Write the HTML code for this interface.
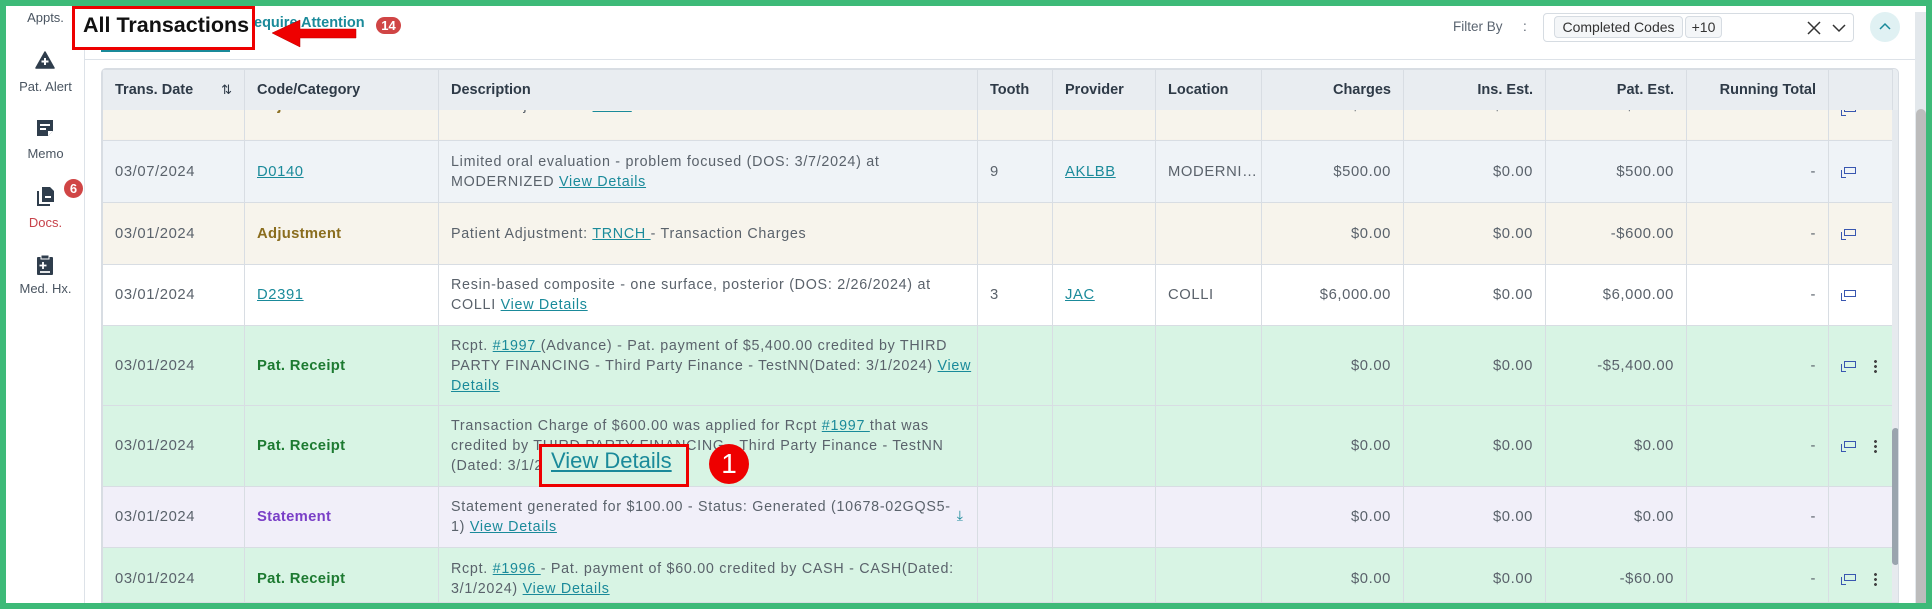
<!DOCTYPE html>
<html><head><meta charset="utf-8"><style>
*{box-sizing:border-box;margin:0;padding:0}
body{width:1932px;height:609px;background:#3dba78;font-family:"Liberation Sans",sans-serif;position:relative;overflow:hidden;color:#5a626b}
.abs{position:absolute}
#page{left:6px;top:6px;width:1920px;height:597px;background:#fff;overflow:hidden}
.sb{left:0;top:0;width:79px;height:597px;border-right:1px solid #dde2e8;background:#fff}
.sl{position:absolute;left:0;width:79px;text-align:center;font-size:13px;color:#4a5561}
table{border-collapse:collapse;table-layout:fixed;font-size:14.8px}
td,th{border:1px solid #d8dde3;padding:0 12px;vertical-align:middle;line-height:20px;white-space:nowrap}
td{letter-spacing:0.6px}
td.d{font-size:14.3px;letter-spacing:0.72px}
th{background:#e9edf1;color:#2e3a47;font-weight:bold;text-align:left;height:41px;font-size:14.5px}
.r{text-align:right}
a{color:#1a8a9a;text-decoration:underline}
.adj{background:#f7f4ec}.sel{background:#eff3f7}.wh{background:#fff}.pr{background:#d8f4e4}.st{background:#f1eff9}
.cadj{color:#8a6d1e;font-weight:bold;letter-spacing:0.3px}.cpr{color:#1d7a31;font-weight:bold;letter-spacing:0.3px}.cst{color:#7a3fc7;font-weight:bold;letter-spacing:0.3px}
.ic{display:inline-block;width:14px;height:10px;position:relative;vertical-align:middle}
.ic:before{content:"";position:absolute;left:3px;top:0;width:10px;height:5px;border:1.6px solid #3856b0}
.ic:after{content:"";position:absolute;left:0;top:3px;width:4px;height:7px;border-left:1.6px solid #3856b0;border-bottom:1.6px solid #3856b0}
.keb{position:absolute;left:45px;top:50%;margin-top:-7px;width:3px;height:14px;background:radial-gradient(circle,#444 1.3px,transparent 1.6px) 0 0/3px 5px repeat-y}
</style></head><body>
<div id="page" class="abs">
 <div class="abs sb">
  <div class="sl" style="top:4px">Appts.</div>
  <svg class="abs" style="left:29px;top:45px" width="20" height="18" viewBox="0 0 20 18"><path d="M10 1L19 17H1Z" fill="#2f3d4c" stroke="#2f3d4c" stroke-linejoin="round" stroke-width="1.5"/><path d="M10 7v7M6.5 10.5h7" stroke="#fff" stroke-width="2"/></svg>
  <div class="sl" style="top:73px">Pat. Alert</div>
  <svg class="abs" style="left:29px;top:112px" width="20" height="20" viewBox="0 0 20 20"><path d="M2 2h16v11l-5 5H2z" fill="#2f3d4c"/><path d="M5 7h10M5 11h6" stroke="#fff" stroke-width="2"/><path d="M13 18v-5h5" fill="#fff"/></svg>
  <div class="sl" style="top:140px">Memo</div>
  <svg class="abs" style="left:31px;top:180px" width="18" height="20" viewBox="0 0 18 20"><path d="M5 1h8l4 4v11H5z" fill="#2f3d4c"/><path d="M1 5v14h12" stroke="#2f3d4c" stroke-width="2" fill="none"/><path d="M8 11h6" stroke="#fff" stroke-width="2"/></svg>
  <div class="abs" style="left:58px;top:173px;width:19px;height:19px;border-radius:50%;background:#d04545;color:#fff;font-size:13px;text-align:center;line-height:19px;font-weight:bold">6</div>
  <div class="sl" style="top:209px;color:#c7424a">Docs.</div>
  <svg class="abs" style="left:30px;top:248px" width="18" height="22" viewBox="0 0 18 22"><rect x="1" y="3" width="16" height="18" rx="1" fill="#2f3d4c"/><rect x="5" y="1" width="8" height="4" fill="#2f3d4c" stroke="#fff" stroke-width="1"/><path d="M7 8v7M3.5 11.5h7M4 18h10" stroke="#fff" stroke-width="1.8"/></svg>
  <div class="sl" style="top:275px">Med. Hx.</div>
 </div>
 <div class="abs" style="left:79px;top:53px;width:1830px;height:1px;background:#dde2e8"></div>
 <div class="abs" style="left:95px;top:43px;width:129px;height:3px;background:#1a8a9a"></div>
 <div class="abs" style="left:248px;top:9px;font-size:14.5px;font-weight:bold;color:#1a8a9a">equire Attention</div>
 <div class="abs" style="left:370px;top:11px;width:25px;height:17px;border-radius:9px;background:#d04545;color:#fff;font-size:13px;text-align:center;line-height:17px;font-weight:bold">14</div>
 <div class="abs" style="left:66px;top:0;width:183px;height:44px;border:3px solid #e00;background:#fff"></div>
 <div class="abs" style="left:77px;top:7px;font-size:21.5px;font-weight:bold;color:#111">All Transactions</div>
 <svg class="abs" style="left:262px;top:10px" width="96" height="36" viewBox="0 0 96 36"><path d="M4 17L32 4v9h56v9H32v9z" fill="#e00" stroke="#b00" stroke-width=".5"/></svg>
 <div class="abs" style="left:1447px;top:13px;font-size:13.5px;color:#5a6470">Filter By</div>
 <div class="abs" style="left:1517px;top:13px;font-size:13.5px;color:#5a6470">:</div>
 <div class="abs" style="left:1537px;top:7px;width:311px;height:29px;border:1px solid #d6dce2;border-radius:4px"></div>
 <div class="abs" style="left:1548px;top:10px;width:129px;height:22px;border:1px solid #d6dce2;border-radius:4px;background:#f4f6f8;font-size:14px;color:#333;line-height:20px;text-align:center">Completed Codes</div>
 <div class="abs" style="left:1679px;top:10px;width:37px;height:22px;border:1px solid #d6dce2;border-radius:4px;background:#f4f6f8;font-size:14px;color:#333;line-height:20px;text-align:center">+10</div>
 <svg class="abs" style="left:1800px;top:14px" width="40" height="16" viewBox="0 0 40 16"><path d="M2 2l12 12M14 2L2 14" stroke="#333" stroke-width="1.5"/><path d="M27 5l6 6 6-6" stroke="#333" stroke-width="1.5" fill="none"/></svg>
 <div class="abs" style="left:1864px;top:6px;width:30px;height:30px;border-radius:50%;background:#e0f1f3"></div>
 <svg class="abs" style="left:1873px;top:16px" width="12" height="8" viewBox="0 0 12 8"><path d="M1 7l5-5 5 5" stroke="#1a8a9a" stroke-width="1.5" fill="none"/></svg>
 <div class="abs" style="left:1909px;top:6px;width:11px;height:591px;background:#e3e8ec"></div>
 <div class="abs" style="left:1910px;top:103px;width:10px;height:494px;background:#bcbcbc;border-radius:5px 5px 0 0"></div>
 <div class="abs" style="left:95px;top:62px;width:1798px;height:535px;border:1px solid #d8dde3;border-radius:5px 5px 0 0;overflow:hidden;background:#e9edf1">
  <table style="width:1790px">
   <colgroup><col style="width:142px"><col style="width:194px"><col style="width:539px"><col style="width:75px"><col style="width:103px"><col style="width:106px"><col style="width:142px"><col style="width:142px"><col style="width:141px"><col style="width:142px"><col style="width:64px"></colgroup>
   <tr><th>Trans. Date <span style="float:right;font-weight:normal;font-size:13px">⇅</span></th><th>Code/Category</th><th>Description</th><th>Tooth</th><th>Provider</th><th>Location</th><th class="r">Charges</th><th class="r">Ins. Est.</th><th class="r">Pat. Est.</th><th class="r">Running Total</th><th></th></tr>
  </table>
  <div style="position:absolute;left:0;top:41px;width:1790px;height:500px;overflow:hidden">
  <table style="width:1790px;margin-top:-19px">
   <colgroup><col style="width:142px"><col style="width:194px"><col style="width:539px"><col style="width:75px"><col style="width:103px"><col style="width:106px"><col style="width:142px"><col style="width:142px"><col style="width:141px"><col style="width:142px"><col style="width:64px"></colgroup>
   <tr class="adj" style="height:49px"><td style="vertical-align:top;padding-top:4px">03/07/2024</td><td class="cadj" style="vertical-align:top;padding-top:4px">Adjustment</td><td class="d" style="vertical-align:top;padding-top:4px">Patient Adjustment: <a>STAX</a> - Sales Tax</td><td></td><td></td><td></td><td class="r" style="vertical-align:top;padding-top:4px">$0.00</td><td class="r" style="vertical-align:top;padding-top:4px">$0.00</td><td class="r" style="vertical-align:top;padding-top:4px">$20.00</td><td></td><td style="vertical-align:top;padding-top:8px"><span class="ic"></span></td></tr>
   <tr class="sel" style="height:62px;box-shadow:0 2px 4px rgba(0,0,0,.15)"><td>03/07/2024</td><td><a>D0140</a></td><td class="d">Limited oral evaluation - problem focused (DOS: 3/7/2024) at<br>MODERNIZED <a>View Details</a></td><td>9</td><td><a>AKLBB</a></td><td>MODERNI…</td><td class="r">$500.00</td><td class="r">$0.00</td><td class="r">$500.00</td><td class="r">-</td><td><span class="ic"></span></td></tr>
   <tr class="adj" style="height:62px"><td>03/01/2024</td><td class="cadj">Adjustment</td><td class="d">Patient Adjustment: <a>TRNCH </a>- Transaction Charges</td><td></td><td></td><td></td><td class="r">$0.00</td><td class="r">$0.00</td><td class="r">-$600.00</td><td class="r">-</td><td><span class="ic"></span></td></tr>
   <tr class="wh" style="height:61px"><td>03/01/2024</td><td><a>D2391</a></td><td class="d">Resin-based composite - one surface, posterior (DOS: 2/26/2024) at<br>COLLI <a>View Details</a></td><td>3</td><td><a>JAC</a></td><td>COLLI</td><td class="r">$6,000.00</td><td class="r">$0.00</td><td class="r">$6,000.00</td><td class="r">-</td><td><span class="ic"></span></td></tr>
   <tr class="pr" style="height:80px"><td>03/01/2024</td><td class="cpr">Pat. Receipt</td><td class="d">Rcpt. <a>#1997 </a>(Advance) - Pat. payment of $5,400.00 credited by THIRD<br>PARTY FINANCING - Third Party Finance - TestNN(Dated: 3/1/2024) <a>View</a><br><a>Details</a></td><td></td><td></td><td></td><td class="r">$0.00</td><td class="r">$0.00</td><td class="r">-$5,400.00</td><td class="r">-</td><td style="position:relative"><span class="ic"></span><span class="keb"></span></td></tr>
   <tr class="pr" style="height:81px"><td>03/01/2024</td><td class="cpr">Pat. Receipt</td><td class="d">Transaction Charge of $600.00 was applied for Rcpt <a>#1997 </a>that was<br>credited by THIRD PARTY FINANCING - Third Party Finance - TestNN<br>(Dated: 3/1/2024) <a>View Details</a></td><td></td><td></td><td></td><td class="r">$0.00</td><td class="r">$0.00</td><td class="r">$0.00</td><td class="r">-</td><td style="position:relative"><span class="ic"></span><span class="keb"></span></td></tr>
   <tr class="st" style="height:61px"><td>03/01/2024</td><td class="cst">Statement</td><td class="d" style="position:relative">Statement generated for $100.00 - Status: Generated (10678-02GQS5-<br>1) <a>View Details</a><span style="position:absolute;right:14px;top:18px;color:#1a8a9a;font-size:14px;letter-spacing:0">⤓</span></td><td></td><td></td><td></td><td class="r">$0.00</td><td class="r">$0.00</td><td class="r">$0.00</td><td class="r">-</td><td></td></tr>
   <tr class="pr" style="height:62px"><td>03/01/2024</td><td class="cpr">Pat. Receipt</td><td class="d">Rcpt. <a>#1996 </a>- Pat. payment of $60.00 credited by CASH - CASH(Dated:<br>3/1/2024) <a>View Details</a></td><td></td><td></td><td></td><td class="r">$0.00</td><td class="r">$0.00</td><td class="r">-$60.00</td><td class="r">-</td><td style="position:relative"><span class="ic"></span><span class="keb"></span></td></tr>
  </table>
  </div>
  <div class="abs" style="left:1790px;top:41px;width:8px;height:500px;background:#e6eaee"></div>
  <div class="abs" style="left:1790px;top:359px;width:7px;height:137px;background:#9aa4ae;border-radius:4px"></div>
 </div>
 <div class="abs" style="left:533px;top:438px;width:150px;height:43px;border:3px solid #e00;background:#d8f4e4"></div>
 <div class="abs" style="left:545px;top:442px;font-size:22px;color:#1a8a9a;text-decoration:underline">View Details</div>
 <div class="abs" style="left:703px;top:438px;width:40px;height:40px;border-radius:50%;background:#e00;color:#fff;font-size:28px;text-align:center;line-height:40px">1</div>
</div>
</body></html>
